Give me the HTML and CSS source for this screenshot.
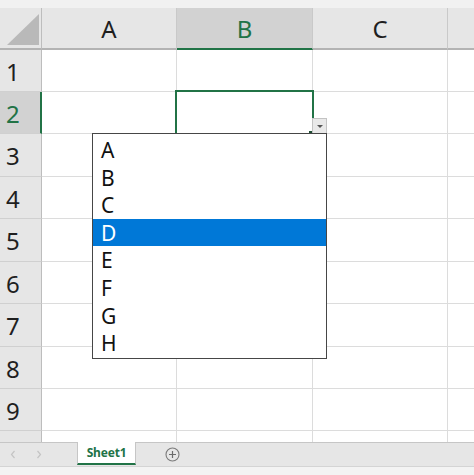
FILE: index.html
```html
<!DOCTYPE html>
<html lang="en">
<head>
<meta charset="utf-8">
<title>Sheet1</title>
<link rel="stylesheet" href="styles.css">
</head>
<body>
<div class="app">
  <div class="top-strip"></div>
  <div class="grid">
    <div class="corner"><div class="corner-tri"></div></div>
    <div class="col-hdr">A</div>
    <div class="col-hdr selected">B</div>
    <div class="col-hdr">C</div>
    <div class="col-hdr last"></div>

    <div class="row-hdr">1</div>
    <div class="cell"></div><div class="cell"></div><div class="cell"></div><div class="cell last"></div>

    <div class="row-hdr selected">2</div>
    <div class="cell"></div>
    <div class="cell active">
      <div class="sel-box"></div>
      <div class="fill-handle"></div>
      <div class="dd-button"><span class="dd-arrow"></span></div>
      <ul class="dd-list">
        <li>A</li>
        <li>B</li>
        <li>C</li>
        <li class="hl">D</li>
        <li>E</li>
        <li>F</li>
        <li>G</li>
        <li>H</li>
      </ul>
    </div>
    <div class="cell"></div><div class="cell last"></div>

    <div class="row-hdr">3</div>
    <div class="cell"></div><div class="cell"></div><div class="cell"></div><div class="cell last"></div>
    <div class="row-hdr">4</div>
    <div class="cell"></div><div class="cell"></div><div class="cell"></div><div class="cell last"></div>
    <div class="row-hdr">5</div>
    <div class="cell"></div><div class="cell"></div><div class="cell"></div><div class="cell last"></div>
    <div class="row-hdr">6</div>
    <div class="cell"></div><div class="cell"></div><div class="cell"></div><div class="cell last"></div>
    <div class="row-hdr">7</div>
    <div class="cell"></div><div class="cell"></div><div class="cell"></div><div class="cell last"></div>
    <div class="row-hdr">8</div>
    <div class="cell"></div><div class="cell"></div><div class="cell"></div><div class="cell last"></div>
    <div class="row-hdr">9</div>
    <div class="cell"></div><div class="cell"></div><div class="cell"></div><div class="cell last"></div>
    <div class="row-hdr partial"></div>
    <div class="cell partial"></div><div class="cell partial"></div><div class="cell partial"></div><div class="cell partial last"></div>
  </div>

  <div class="tabbar">
    <div class="nav">
      <svg width="6" height="9" viewBox="0 0 6 9"><path d="M4.5 1 L1.5 4.5 L4.5 8" fill="none" stroke="#c4c4c4" stroke-width="1.2"/></svg>
      <svg width="6" height="9" viewBox="0 0 6 9"><path d="M1.5 1 L4.5 4.5 L1.5 8" fill="none" stroke="#c4c4c4" stroke-width="1.2"/></svg>
    </div>
    <div class="tab">Sheet1</div>
    <div class="add">
      <svg width="15" height="15" viewBox="0 0 15 15"><circle cx="7.5" cy="7.5" r="6.5" fill="none" stroke="#7a7a7a" stroke-width="1.1"/><path d="M7.5 4 V11 M4 7.5 H11" stroke="#6a6a6a" stroke-width="1.2"/></svg>
    </div>
  </div>
  <div class="statusbar"></div>
</div>
</body>
</html>
```

FILE: styles.css
```css
* { box-sizing: border-box; }

html, body {
  margin: 0;
  padding: 0;
  background: #ffffff;
}

body {
  font-family: "Noto Sans", "Open Sans", sans-serif;
  color: #222222;
  width: 474px;
  height: 475px;
  overflow: hidden;
}

.app {
  display: flex;
  flex-direction: column;
  height: 475px;
}

.top-strip {
  height: 8px;
  background: #f1f1f1;
}

.grid {
  display: grid;
  grid-template-columns: 42px 135px 136px 135px 1fr;
  grid-template-rows: 42px 42px 42px 43px 42px 43px 42px 43px 42px 42px 11px;
}

.corner {
  background: #e6e6e6;
  border-right: 1px solid #bdbdbd;
  border-bottom: 2px solid #b3b3b3;
  padding: 6px 2px 2px 7px;
}

.corner-tri {
  width: 32px;
  height: 31px;
  background: #b9b9b9;
  clip-path: polygon(100% 0, 100% 100%, 0 100%);
}

.col-hdr {
  background: #e6e6e6;
  border-right: 1px solid #c9c9c9;
  border-bottom: 2px solid #b3b3b3;
  font-size: 24px;
  line-height: 34px;
  padding-top: 4px;
  text-align: center;
  color: #1f1f1f;
}

.col-hdr.last { border-right: none; }

.col-hdr.selected {
  background: #d2d2d2;
  border-bottom-color: #217346;
  color: #217346;
}

.row-hdr {
  background: #e6e6e6;
  border-right: 1px solid #bdbdbd;
  border-bottom: 1px solid #d0d0d0;
  font-size: 24px;
  line-height: 36px;
  padding: 4px 0 0 6px;
  color: #1f1f1f;
}

.row-hdr.selected {
  background: #d2d2d2;
  border-right: 2px solid #217346;
  color: #217346;
}

.row-hdr.partial { border-bottom: none; }

.cell {
  background: #ffffff;
  border-right: 1px solid #dcdcdc;
  border-bottom: 1px solid #dcdcdc;
}

.cell.last { border-right: none; }
.cell.partial { border-bottom: none; }

.cell.active { position: relative; }

.sel-box {
  position: absolute;
  left: -2px;
  top: -2px;
  right: -2px;
  bottom: -2px;
  border: 2px solid #217346;
  border-bottom: none;
  pointer-events: none;
}

.fill-handle {
  position: absolute;
  right: -2px;
  bottom: -2px;
  width: 5px;
  height: 4px;
  background: #1e4d33;
}

.dd-button {
  position: absolute;
  left: 135px;
  top: 26px;
  width: 15px;
  height: 16px;
  background: #e9e9e9;
  border: 1px solid #c3c3c3;
  display: flex;
  align-items: center;
  justify-content: center;
  z-index: 2;
}

.dd-arrow {
  width: 0;
  height: 0;
  border-left: 3px solid transparent;
  border-right: 3px solid transparent;
  border-top: 3px solid #555555;
}

.dd-list {
  position: absolute;
  left: -85px;
  top: 41px;
  width: 235px;
  height: 226px;
  margin: 0;
  padding: 2px 0 0 0;
  list-style: none;
  background: #ffffff;
  border: 1px solid #464646;
  z-index: 3;
}

.dd-list li {
  height: 27.6px;
  line-height: 27.6px;
  padding-left: 8px;
  padding-top: 1px;
  font-size: 21px;
  color: #111111;
}

.dd-list li.hl {
  background: #0078d7;
  color: #ffffff;
}

.tabbar {
  height: 25px;
  background: #e6e6e6;
  border-top: 1px solid #c6c6c6;
  border-bottom: 1px solid #d4d4d4;
  display: flex;
  align-items: stretch;
}

.nav {
  width: 77px;
  display: flex;
  align-items: center;
  gap: 20px;
  padding-left: 10px;
}

.tab {
  width: 59px;
  margin-top: -1px;
  margin-bottom: 1px;
  background: #ffffff;
  border-left: 1px solid #c6c6c6;
  border-right: 1px solid #c6c6c6;
  border-bottom: 2px solid #217346;
  color: #217346;
  font-weight: bold;
  font-size: 12px;
  letter-spacing: -0.2px;
  display: flex;
  align-items: center;
  justify-content: center;
}

.add {
  margin-left: 29px;
  display: flex;
  align-items: center;
}

.statusbar {
  flex: 1;
  background: #f3f3f3;
}
```
